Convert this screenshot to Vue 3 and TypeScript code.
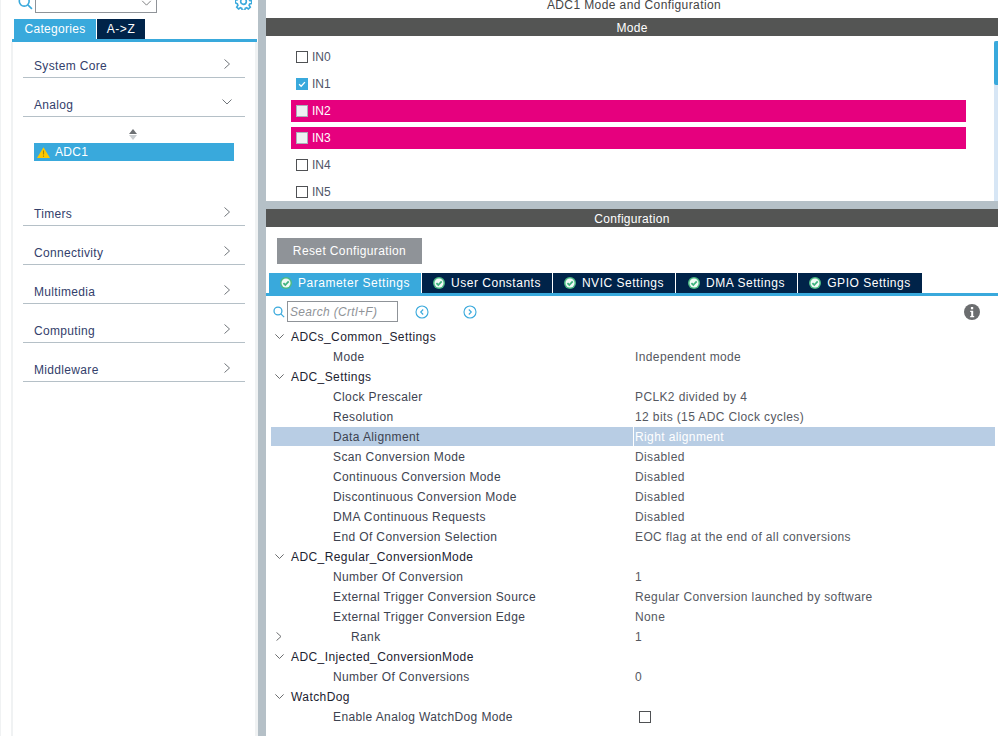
<script setup lang="ts">
interface TreeRow { label: string; value?: string; kind: 'group' | 'item' | 'sub'; selected?: boolean; check?: boolean }

const categories = [
  { name: 'System Core', open: false },
  { name: 'Analog', open: true },
  { name: 'Timers', open: false },
  { name: 'Connectivity', open: false },
  { name: 'Multimedia', open: false },
  { name: 'Computing', open: false },
  { name: 'Middleware', open: false },
]

const modes = [
  { name: 'IN0', checked: false, alert: false },
  { name: 'IN1', checked: true, alert: false },
  { name: 'IN2', checked: false, alert: true },
  { name: 'IN3', checked: false, alert: true },
  { name: 'IN4', checked: false, alert: false },
  { name: 'IN5', checked: false, alert: false },
]

const tabs = [
  { name: 'Parameter Settings', cls: 't1', active: true },
  { name: 'User Constants', cls: 't2', active: false },
  { name: 'NVIC Settings', cls: 't3', active: false },
  { name: 'DMA Settings', cls: 't4', active: false },
  { name: 'GPIO Settings', cls: 't5', active: false },
]

const rows: TreeRow[] = [
  { label: 'ADCs_Common_Settings', kind: 'group' },
  { label: 'Mode', value: 'Independent mode', kind: 'item' },
  { label: 'ADC_Settings', kind: 'group' },
  { label: 'Clock Prescaler', value: 'PCLK2 divided by 4', kind: 'item' },
  { label: 'Resolution', value: '12 bits (15 ADC Clock cycles)', kind: 'item' },
  { label: 'Data Alignment', value: 'Right alignment', kind: 'item', selected: true },
  { label: 'Scan Conversion Mode', value: 'Disabled', kind: 'item' },
  { label: 'Continuous Conversion Mode', value: 'Disabled', kind: 'item' },
  { label: 'Discontinuous Conversion Mode', value: 'Disabled', kind: 'item' },
  { label: 'DMA Continuous Requests', value: 'Disabled', kind: 'item' },
  { label: 'End Of Conversion Selection', value: 'EOC flag at the end of all conversions', kind: 'item' },
  { label: 'ADC_Regular_ConversionMode', kind: 'group' },
  { label: 'Number Of Conversion', value: '1', kind: 'item' },
  { label: 'External Trigger Conversion Source', value: 'Regular Conversion launched by software', kind: 'item' },
  { label: 'External Trigger Conversion Edge', value: 'None', kind: 'item' },
  { label: 'Rank', value: '1', kind: 'sub' },
  { label: 'ADC_Injected_ConversionMode', kind: 'group' },
  { label: 'Number Of Conversions', value: '0', kind: 'item' },
  { label: 'WatchDog', kind: 'group' },
  { label: 'Enable Analog WatchDog Mode', kind: 'item', check: true },
]
</script>

<template>
  <div class="app">
    <aside class="left">
      <div class="topbar">
        <svg class="search top-search" viewBox="0 0 14 14"><circle cx="5.8" cy="5.8" r="4.6" /><path d="M9.2 9.2 13 13" /></svg>
        <div class="combo">
          <svg class="combo-arrow" viewBox="0 0 12 7"><path d="M1 1l5 5 5-5" /></svg>
        </div>
        <svg class="gear" viewBox="0 0 18 18">
          <circle cx="9" cy="9" r="3" />
          <path d="M7.6 1h2.8l.4 2.2 1.5.6 1.9-1.3 2 2-1.3 1.9.6 1.5 2.2.4v2.8l-2.2.4-.6 1.5 1.3 1.9-2 2-1.9-1.3-1.5.6-.4 2.2H7.6l-.4-2.2-1.5-.6-1.9 1.3-2-2 1.3-1.9-.6-1.5L.3 10.4V7.6l2.2-.4.6-1.5-1.3-1.9 2-2 1.9 1.3 1.5-.6z" />
        </svg>
      </div>
      <div class="side-tabs">
        <div class="side-tab on">Categories</div>
        <div class="side-tab off">A-&gt;Z</div>
      </div>
      <div class="blue-line"></div>
      <div class="cat-panel">
        <template v-for="c in categories" :key="c.name">
          <div class="cat">
            <span>{{ c.name }}</span>
            <svg v-if="c.open" class="cat-chev down" viewBox="0 0 10 6"><path d="M.5.5 5 5 9.500.5" /></svg>
            <svg v-else class="cat-chev right" viewBox="0 0 6 10"><path d="M.5.5 5.500 5 .5 9.500" /></svg>
          </div>
          <div v-if="c.open" class="analog">
            <div class="sorter"><i class="up"></i><i class="dn"></i></div>
            <div class="adc">
              <svg class="warn" viewBox="0 0 13 11"><path d="M6.500.3 13 11H0z" fill="#fdc800" /><path d="M6.500 3.500v4M6.500 8.500v1.300" fill="none" stroke="#a88500" stroke-width="1.100" /></svg>
              <span>ADC1</span>
            </div>
          </div>
        </template>
      </div>
    </aside>

    <div class="vsplit"></div>

    <main class="main">
      <div class="title">ADC1 Mode and Configuration</div>
      <div class="bar">Mode</div>
      <section class="modes">
        <div v-for="m in modes" :key="m.name" class="mode" :class="{ alert: m.alert }">
          <span class="box" :class="{ checked: m.checked }">
            <svg v-if="m.checked" viewBox="0 0 12 12"><path d="M2.500 6.200 5 8.700l4.500-5" /></svg>
          </span>
          <span>{{ m.name }}</span>
        </div>
        <div class="scroll"><div class="thumb"></div></div>
      </section>
      <div class="hsplit"></div>
      <div class="bar">Configuration</div>
      <section class="config">
        <button class="reset">Reset Configuration</button>
        <div class="tabs">
          <div v-for="t in tabs" :key="t.name" class="tab" :class="[t.cls, { active: t.active }]">
            <svg class="ok" viewBox="0 0 12 12"><circle cx="6" cy="6" r="6" fill="#4dbb85" /><circle cx="6" cy="6" r="4.500" fill="#f2faf6" /><path d="M3.400 6.100 5.300 8 8.700 4.400" fill="none" stroke="#3fb37f" stroke-width="1.800" /></svg>
            <span>{{ t.name }}</span>
          </div>
        </div>
        <div class="tools">
          <svg class="search" viewBox="0 0 14 14"><circle cx="5.800" cy="5.800" r="4.600" /><path d="M9.200 9.200 13 13" /></svg>
          <div class="find">Search (Crtl+F)</div>
          <svg class="nav prev" viewBox="0 0 14 14"><circle cx="7" cy="7" r="6" /><path d="M8.200 4.500 5.700 7l2.500 2.500" /></svg>
          <svg class="nav next" viewBox="0 0 14 14"><circle cx="7" cy="7" r="6" /><path d="M5.800 4.500 8.300 7l-2.500 2.500" /></svg>
          <svg class="info" viewBox="0 0 16 16"><circle cx="8" cy="8" r="8" fill="#6b6d6f" /><rect x="6.900" y="3" width="2.300" height="2.300" fill="#fff" /><path d="M6.200 6.700h3v5.200h1v1.300H6.200v-1.300h1V8H6.200z" fill="#fff" /></svg>
        </div>
        <div class="tree">
          <div v-for="r in rows" :key="r.label" class="row" :class="[r.kind, { selected: r.selected }]">
            <svg v-if="r.kind === 'group'" class="tw" viewBox="0 0 9 5"><path d="M.4.400 4.500 4.500 8.600.400" /></svg>
            <svg v-else-if="r.kind === 'sub'" class="tw tw-r" viewBox="0 0 6 9"><path d="M.5.400 5 4.500.5 8.600" /></svg>
            <span class="label">{{ r.label }}</span>
            <span v-if="r.value" class="value">{{ r.value }}</span>
            <span v-if="r.check" class="cellbox"></span>
          </div>
        </div>
      </section>
    </main>
  </div>
</template>

<style>
html, body { margin: 0; background: #fff; }
</style>

<style scoped>
.app {
  width: 998px; height: 736px; overflow: hidden; display: flex;
  font-family: "Liberation Sans", Arial, sans-serif; font-size: 12px; background: #fff;
}
.left {
  width: 258px; flex: none; display: flex; flex-direction: column; box-sizing: border-box;
  padding-left: 10px; border-left: 1px solid #f0f2f3;
}
.topbar { height: 19px; flex: none; display: flex; align-items: flex-start; }
.search { fill: none; stroke: #39a9dc; stroke-width: 1.5; }
.top-search { width: 15px; height: 15px; margin: -5px 0 0 7px; }
.combo { width: 122px; height: 13px; margin-left: 2px; border: 1px solid #8f9398; border-top: 0; box-sizing: border-box; position: relative; }
.combo-arrow { position: absolute; right: 4px; top: 0; width: 11px; height: 6px; fill: none; stroke: #6b6d6f; stroke-width: 1; }
.gear { width: 17px; height: 17px; margin: -7px 0 0 78px; fill: none; stroke: #39a9dc; stroke-width: 1.7; }
.side-tabs { display: flex; height: 20px; flex: none; padding-left: 3px; gap: 1px; }
.side-tab { color: #fff; line-height: 20px; text-align: center; letter-spacing: .3px; }
.side-tab.on { width: 82px; background: #39a9dc; }
.side-tab.off { width: 48px; background: #002349; letter-spacing: .55px; }
.blue-line { height: 3px; flex: none; margin: 0 1px; background: #39a9dc; }
.cat-panel {
  flex: 1; border-left: 2px solid #f0f2f3; border-right: 3px solid #f0f2f3;
  padding: 3px 10px 0 10px; display: flex; flex-direction: column;
}
.cat {
  height: 33px; flex: none; box-sizing: border-box; margin-bottom: 6px; border-bottom: 1px solid #b5c0c7;
  padding: 13px 0 0 11px; color: #33406b; line-height: 16px; letter-spacing: .33px; position: relative;
}
.cat-chev { position: absolute; fill: none; stroke: #70757a; stroke-width: 1; }
.cat-chev.right { width: 6px; height: 10px; right: 15px; top: 14px; }
.cat-chev.down { width: 10px; height: 6px; right: 13px; top: 15px; }
.analog { height: 70px; flex: none; margin-top: -6px; position: relative; margin-bottom: 6px; }
.sorter { position: absolute; left: 106px; top: 12px; display: flex; flex-direction: column; gap: 1px; }
.sorter i { width: 0; height: 0; border-left: 4px solid transparent; border-right: 4px solid transparent; display: block; }
.sorter .up { border-bottom: 5px solid #6d7073; }
.sorter .dn { border-top: 5px solid #c9cdd0; }
.adc {
  position: absolute; left: 11px; top: 26px; width: 200px; height: 18px; background: #39a9dc; color: #fff;
  display: flex; align-items: center; gap: 5px; padding-left: 3px; box-sizing: border-box; letter-spacing: .3px;
}
.warn { width: 13px; height: 11px; flex: none; }
.vsplit { width: 8px; flex: none; background: #b5c0c7; }
.main { flex: 1; min-width: 0; display: flex; flex-direction: column; }
.title { height: 18px; flex: none; line-height: 10px; text-align: center; color: #444; letter-spacing: .4px; padding-left: 4px; }
.bar { height: 18px; flex: none; background: #545554; color: #fff; text-align: center; line-height: 20px; letter-spacing: .3px; }
.modes { height: 165px; flex: none; position: relative; overflow: hidden; padding-top: 10px; box-sizing: border-box; }
.mode {
  height: 22px; margin: 0 32px 5px 25px; display: flex; align-items: center; gap: 4px; padding-left: 5px;
  color: #4f5568;
}
.mode.alert { background: #e6007e; color: #fff; }
.box { width: 12px; height: 12px; box-sizing: border-box; border: 1px solid #4f5154; flex: none; display: block; }
.alert .box { background: #eef1f3; border-color: #a9b1b8; }
.box.checked { background: #39a9dc; border-color: #39a9dc; }
.box svg { width: 10px; height: 10px; display: block; fill: none; stroke: #fff; stroke-width: 1.6; }
.scroll { position: absolute; right: 0; top: 5px; bottom: 0; width: 4px; background: #d7e6f5; }
.thumb { height: 44px; background: #39a9dc; border-radius: 2px 0 0 2px; }
.hsplit { height: 8px; flex: none; background: #b5c0c7; }
.config { flex: 1; min-height: 0; padding-top: 11px; box-sizing: border-box; }
.reset {
  display: block; width: 145px; height: 26px; margin-left: 11px; border: 0; padding: 0; background: #8f9398; color: #fff;
  font: inherit; letter-spacing: .38px;
}
.tabs { display: flex; gap: 1px; height: 23px; box-sizing: border-box; margin-top: 9px; padding-left: 3px; border-bottom: 3px solid #39a9dc; }
.tab { background: #002349; color: #fff; display: flex; align-items: center; justify-content: center; gap: 6px; letter-spacing: .52px; height: 20px; }
.tab.active { background: #39a9dc; }
.t1 { width: 152px; } .t2 { width: 130px; } .t3 { width: 122px; } .t4 { width: 121px; } .t5 { width: 124px; }
.ok { width: 12px; height: 12px; flex: none; }
.tools { height: 31px; display: flex; align-items: center; padding-left: 7px; box-sizing: border-box; }
.tools .search { width: 12px; height: 12px; flex: none; }
.find {
  width: 111px; height: 21px; margin-left: 2px; border: 1px solid #8f9398; box-sizing: border-box; padding-left: 2px;
  color: #8f9398; font-style: italic; line-height: 20px; letter-spacing: .33px;
}
.nav { width: 14px; height: 14px; fill: none; stroke: #39a9dc; stroke-width: 1.100; flex: none; }
.prev { margin-left: 17px; }
.next { margin-left: 34px; }
.info { width: 16px; height: 16px; margin-left: auto; margin-right: 18px; flex: none; }
.row { height: 20px; position: relative; margin: 0 3px 0 5px; line-height: 20px; color: #3d4350; letter-spacing: .38px; white-space: nowrap; }
.row .label { position: absolute; left: 62px; top: 0; }
.row.group .label { left: 20px; color: #1c2230; letter-spacing: .42px; }
.row.sub .label { left: 80px; }
.row .value { position: absolute; left: 364px; top: 0; color: #55585f; }
.row.selected::before { content: ""; position: absolute; left: 0; right: 0; top: 0; height: 19px; background: #b8cde4; }
.row.selected .value { color: #fff; }
.row.selected::after { content: ""; position: absolute; left: 362px; top: 0; height: 19px; width: 1px; background: #fff; }
.tw { position: absolute; fill: none; stroke: #6b6d6f; stroke-width: 1; }
.row.group .tw { left: 4px; top: 7px; width: 9px; height: 5px; }
.tw-r { left: 5px; top: 5px; width: 6px; height: 9px; }
.cellbox { position: absolute; left: 368px; top: 4px; width: 12px; height: 12px; border: 1px solid #4f5154; box-sizing: border-box; }
</style>
